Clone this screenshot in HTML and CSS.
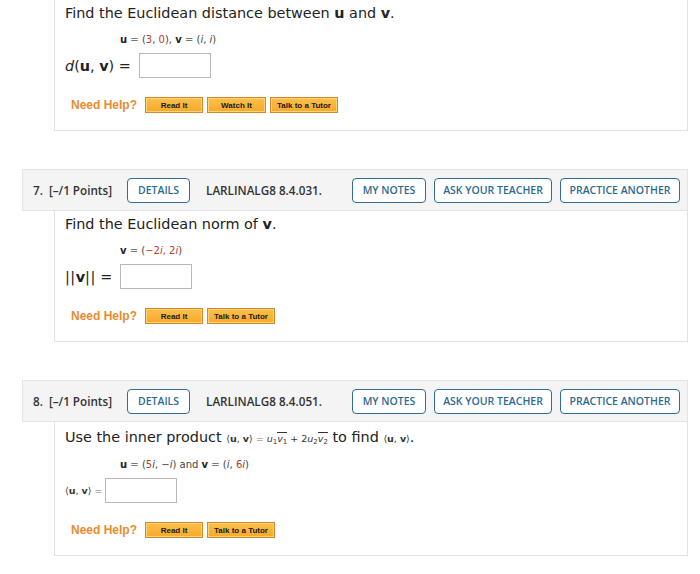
FILE: index.html
```html
<!DOCTYPE html>
<html>
<head>
<meta charset="utf-8">
<link rel="stylesheet" href="styles.css">
</head>
<body>
<div class="page">

  <div class="content first">
    <div class="q">Find the Euclidean distance between <b>u</b> and <b>v</b>.</div>
    <div class="math"><b>u</b> <span class="op">=</span> (<span class="red">3</span>, <span class="red">0</span>), <b>v</b> <span class="op">=</span> (<i>i</i>, <i>i</i>)</div>
    <div class="answer">
      <span class="lbl"><i>d</i>(<b>u</b>, <b>v</b>) =</span>
      <span class="box"></span>
    </div>
    <div class="help">
      <span class="need">Need Help?</span>
      <span class="hbtn w58">Read It</span>
      <span class="hbtn w59">Watch It</span>
      <span class="hbtn w68">Talk to a Tutor</span>
    </div>
  </div>

  <div class="header">
    <span class="num">7.</span>
    <span class="pts">[–/1 Points]</span>
    <span class="btn details">DETAILS</span>
    <span class="code">LARLINALG8 8.4.031.</span>
    <div class="actions">
      <span class="btn notes">MY NOTES</span>
      <span class="btn ask">ASK YOUR TEACHER</span>
      <span class="btn practice">PRACTICE ANOTHER</span>
    </div>
  </div>
  <div class="content">
    <div class="q">Find the Euclidean norm of <b>v</b>.</div>
    <div class="math"><b>v</b> <span class="op">=</span> (<span class="red">−2<i>i</i>, 2<i>i</i></span>)</div>
    <div class="answer">
      <span class="lbl"><span class="bars">||</span><b>v</b><span class="bars">||</span> =</span>
      <span class="box"></span>
    </div>
    <div class="help">
      <span class="need">Need Help?</span>
      <span class="hbtn w58">Read It</span>
      <span class="hbtn w68">Talk to a Tutor</span>
    </div>
  </div>

  <div class="header">
    <span class="num">8.</span>
    <span class="pts">[–/1 Points]</span>
    <span class="btn details">DETAILS</span>
    <span class="code">LARLINALG8 8.4.051.</span>
    <div class="actions">
      <span class="btn notes">MY NOTES</span>
      <span class="btn ask">ASK YOUR TEACHER</span>
      <span class="btn practice">PRACTICE ANOTHER</span>
    </div>
  </div>
  <div class="content tall">
    <div class="q">Use the inner product <span class="sm">⟨<b>u</b>, <b>v</b>⟩ <span class="op">=</span> <i>u</i><sub>1</sub><span class="ov"><i>v</i><sub>1</sub></span> + 2<i>u</i><sub>2</sub><span class="ov"><i>v</i><sub>2</sub></span></span> to find <span class="sm">⟨<b>u</b>, <b>v</b>⟩</span>.</div>
    <div class="math"><b>u</b> <span class="op">=</span> (<span class="red">5</span><i>i</i>, −<i>i</i>) and <b>v</b> <span class="op">=</span> (<i>i</i>, <span class="red">6</span><i>i</i>)</div>
    <div class="answer narrow">
      <span class="lbl sm">⟨<b>u</b>, <b>v</b>⟩ <span class="op">=</span></span>
      <span class="box"></span>
    </div>
    <div class="help">
      <span class="need">Need Help?</span>
      <span class="hbtn w58">Read It</span>
      <span class="hbtn w68">Talk to a Tutor</span>
    </div>
  </div>

</div>
</body>
</html>
```

FILE: styles.css
```css
html, body {
  margin: 0;
  padding: 0;
  background: #ffffff;
}

.page {
  width: 666px;
  padding-left: 22px;
  font-family: "DejaVu Sans", Verdana, sans-serif;
  color: #222;
}

.content {
  margin-left: 32px;
  border: 1px solid #e2e2e2;
  border-top: none;
  padding: 4px 10px 17px 10px;
  margin-bottom: 38px;
}

.content.tall {
  padding-top: 6px;
}

.content.tall .q {
  height: 19px;
}

.q {
  font-size: 14.4px;
  line-height: 18px;
  height: 18px;
  color: #222;
  white-space: nowrap;
}

.q b { font-weight: bold; }

.sm {
  font-size: 9.5px;
  color: #333;
}

.sm sub, .math sub {
  font-size: 7px;
  vertical-align: -2px;
  line-height: 0;
}

.ov {
  display: inline-block;
  border-top: 1px solid #333;
  line-height: 10px;
  padding-top: 1px;
}

.math {
  margin-top: 11px;
  margin-left: 55px;
  font-size: 10px;
  line-height: 14px;
  color: #444;
}

.math b { color: #222; }

.op { color: #777; }

.red { color: #c0392b; }

.answer {
  margin-top: 6px;
  display: flex;
  align-items: center;
  gap: 8px;
  height: 25px;
}

.answer.narrow {
  gap: 3px;
}

.lbl {
  font-size: 14.4px;
  color: #222;
  white-space: nowrap;
}

.bars {
  letter-spacing: 0.5px;
}

.lbl.sm {
  font-size: 9.5px;
  color: #333;
}

.box {
  display: block;
  width: 70px;
  height: 23px;
  border: 1px solid #b8b8b8;
  background: #fff;
}

.help {
  margin-top: 19px;
  margin-left: 6px;
  display: flex;
  align-items: center;
  height: 16px;
}

.need {
  font-family: "Liberation Sans", Arial, sans-serif;
  font-weight: bold;
  font-size: 12px;
  color: #e88c2e;
  margin-right: 8px;
  white-space: nowrap;
}

.hbtn {
  box-sizing: border-box;
  height: 16px;
  margin-right: 4px;
  border: 1px solid #d7862a;
  box-shadow: inset 0 0 0 1px #fbd47a;
  background: linear-gradient(#fcc04c, #f7a928);
  font-family: "Liberation Sans", Arial, sans-serif;
  font-weight: bold;
  font-size: 8px;
  color: #1a1a1a;
  display: flex;
  align-items: center;
  justify-content: center;
  white-space: nowrap;
}

.w58 { width: 58px; }
.w59 { width: 59px; }
.w68 { width: 68px; }

.header {
  box-sizing: border-box;
  height: 42px;
  border: 1px solid #e4e4e4;
  background: #f4f4f4;
  display: flex;
  align-items: center;
  padding: 0 7px 0 10px;
  font-family: "Open Sans", "DejaVu Sans", sans-serif;
  font-weight: 600;
  font-size: 11.7px;
  color: #333;
  white-space: nowrap;
}

.num { margin-right: 6px; }

.pts { margin-right: 15px; }

.code { margin-left: 16px; }

.btn {
  box-sizing: border-box;
  height: 25px;
  display: flex;
  align-items: center;
  justify-content: center;
  padding: 0;
  border: 1.5px solid #316d94;
  border-radius: 4px;
  background: #ffffff;
  color: #2d6a91;
  font-family: "Open Sans", "DejaVu Sans", sans-serif;
  font-weight: 600;
  font-size: 10.5px;
}

.details { width: 63px; }
.notes { width: 74px; }
.ask { width: 118px; }
.practice { width: 120px; }

.actions {
  margin-left: auto;
  display: flex;
  gap: 8px;
}
```
